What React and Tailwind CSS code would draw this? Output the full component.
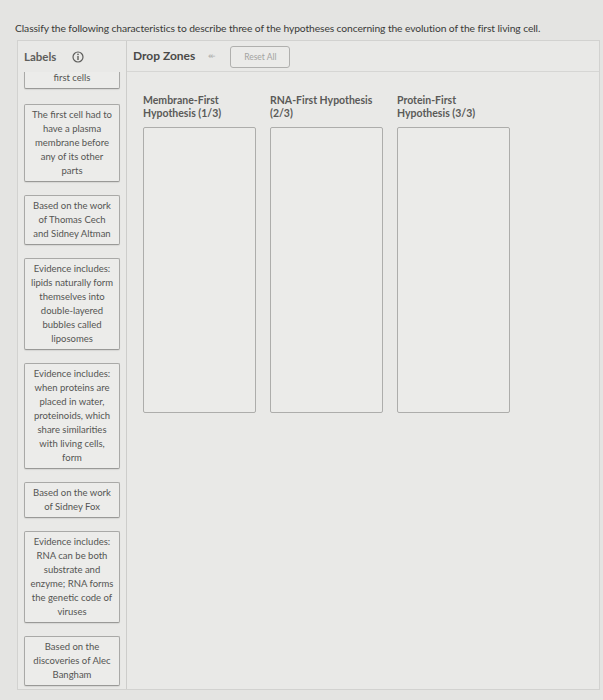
import React from 'react';

const labels = [
  ['The first cell had to', 'have a plasma', 'membrane before', 'any of its other', 'parts'],
  ['Based on the work', 'of Thomas Cech', 'and Sidney Altman'],
  ['Evidence includes:', 'lipids naturally form', 'themselves into', 'double-layered', 'bubbles called', 'liposomes'],
  ['Evidence includes:', 'when proteins are', 'placed in water,', 'proteinoids, which', 'share similarities', 'with living cells,', 'form'],
  ['Based on the work', 'of Sidney Fox'],
  ['Evidence includes:', 'RNA can be both', 'substrate and', 'enzyme; RNA forms', 'the genetic code of', 'viruses'],
  ['Based on the', 'discoveries of Alec', 'Bangham'],
];

const zones = [
  ['Membrane-First', 'Hypothesis (1/3)'],
  ['RNA-First Hypothesis', '(2/3)'],
  ['Protein-First', 'Hypothesis (3/3)'],
];

const LabelCard = ({ lines }) => (
  <div className="w-[96px] shrink-0 border border-[#a9a9a7] border-b-[#999997] rounded-[2px] bg-[#ececea] py-[3px] text-center text-[9.5px] leading-[14px] text-[#555553] shadow-[0_1px_1px_rgba(0,0,0,0.08)]">
    {lines.map((l, i) => (
      <div key={i} className="whitespace-nowrap">{l}</div>
    ))}
  </div>
);

export default function App() {
  return (
    <div className="w-[603px] h-[700px] bg-[#e4e4e2] overflow-hidden pt-[21px]" style={{ fontFamily: 'Lato, "Open Sans", sans-serif' }}>
      <p className="pl-[15px] text-[10.3px] leading-[14px] tracking-[-0.1px] text-[#3a3a38] whitespace-nowrap">
        Classify the following characteristics to describe three of the hypotheses concerning the evolution of the first living cell.
      </p>

      <div className="ml-[17px] mt-[5px] w-[583px] h-[650px] border border-[#d2d2d0] bg-[#e9e9e7] flex">
        {/* labels column */}
        <div className="w-[109px] shrink-0 border-r border-[#cdcdcb] flex flex-col">
          <div className="h-[31px] shrink-0 flex items-center pl-[6px] gap-[16px]">
            <span className="text-[11.5px] font-bold text-[#5e5e5c]">Labels</span>
            <svg width="12" height="12" viewBox="0 0 12 12" className="text-[#5e5e5c]">
              <circle cx="6" cy="6" r="5" fill="none" stroke="currentColor" strokeWidth="1.2" />
              <rect x="5.3" y="5" width="1.4" height="4" fill="currentColor" />
              <circle cx="6" cy="3.4" r="0.8" fill="currentColor" />
            </svg>
          </div>
          <div className="flex-1 overflow-hidden pl-[6px] flex flex-col gap-[13px]">
            <div className="-mt-[14px] mb-[2px] w-[96px] shrink-0 border border-[#a9a9a7] border-b-[#999997] rounded-[2px] bg-[#ececea] pt-[12px] pb-[3px] text-center text-[9.5px] leading-[14px] text-[#555553] shadow-[0_1px_1px_rgba(0,0,0,0.08)]">
              first cells
            </div>
            {labels.map((lines, i) => (
              <LabelCard key={i} lines={lines} />
            ))}
          </div>
        </div>

        {/* drop zones column */}
        <div className="flex-1 flex flex-col">
          <div className="h-[31px] shrink-0 border-b border-[#d6d6d4] flex items-center pl-[6px]">
            <span className="text-[12px] font-bold text-[#4a4a48]">Drop Zones</span>
            <span className="ml-[13px] text-[9px] text-[#b5b5b3]">↞</span>
            <button className="ml-[14px] mt-[2px] w-[60px] h-[22px] border border-[#b0b0ae] rounded-[3px] text-[8.5px] text-[#a3a3a1] bg-[#ebebe9]">
              Reset All
            </button>
          </div>
          <div className="pl-[16px] pt-[22px] flex gap-[14px]">
            {zones.map((z, i) => (
              <div key={i} className="w-[113px] flex flex-col gap-[7px]">
                <div className="text-[10.5px] leading-[13px] font-bold text-[#5a5a58] whitespace-nowrap">
                  <div>{z[0]}</div>
                  <div>{z[1]}</div>
                </div>
                <div className="h-[286px] border border-[#adadab] rounded-[2px] bg-[#ebebe9]" />
              </div>
            ))}
          </div>
        </div>
      </div>
    </div>
  );
}
